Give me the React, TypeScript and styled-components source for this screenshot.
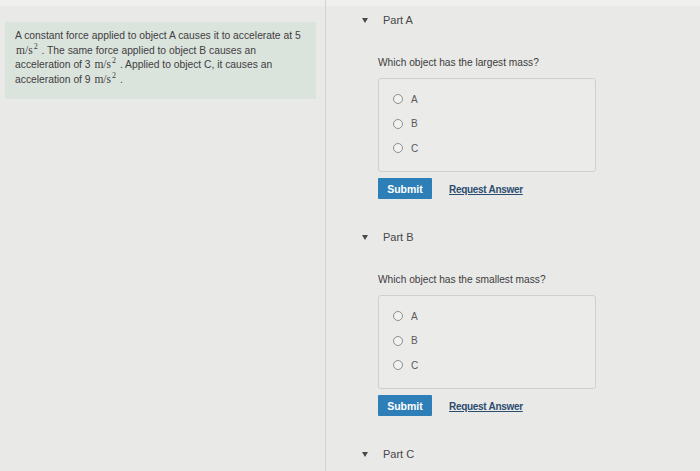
import React from "react";
import styled, { createGlobalStyle } from "styled-components";

const GlobalStyle = createGlobalStyle`
  html, body {
    margin: 0;
    padding: 0;
    background: #e9e9e7;
    font-family: "Liberation Sans", Arial, sans-serif;
    color: #3a3a3a;
  }
`;

const Page = styled.div`
  display: flex;
  width: 700px;
  height: 471px;
  overflow: hidden;
  background: linear-gradient(#efefed 0, #efefed 6px, #e9e9e7 6px);
`;

const LeftColumn = styled.aside`
  width: 326px;
  flex-shrink: 0;
  padding: 22px 0 0 5px;
  box-sizing: border-box;
  border-right: 1px solid #d3d3d1;
`;

const ProblemBox = styled.div`
  width: 311px;
  height: 77px;
  box-sizing: border-box;
  padding: 7px 10px 0 10px;
  background: #dbe3dd;
  font-size: 10.3px;
  line-height: 14.5px;
  color: #404040;
`;

const Math = styled.span`
  font-family: "Liberation Serif", "Times New Roman", serif;
  font-size: 11.5px;
  line-height: 1;
  margin: 0 1px;
  sup {
    font-size: 8px;
    vertical-align: baseline;
    position: relative;
    top: -5px;
    line-height: 0;
    margin-left: 1px;
  }
`;

const RightColumn = styled.main`
  flex: 1;
  padding: 10px 0 0 36px;
`;

const Section = styled.section`
  margin-bottom: 28px;
`;

const PartHeader = styled.div`
  display: flex;
  align-items: center;
  height: 20px;
  gap: 15px;
  font-size: 11px;
  color: #474747;
`;

const Caret = styled.span`
  width: 0;
  height: 0;
  border-left: 3.5px solid transparent;
  border-right: 3.5px solid transparent;
  border-top: 5px solid #4a4a4a;
`;

const Body = styled.div`
  padding-left: 16px;
`;

const Question = styled.p`
  margin: 26px 0 8px 0;
  font-size: 10.2px;
  line-height: 14px;
  color: #3c3c3c;
`;

const Choices = styled.div`
  width: 218px;
  height: 94px;
  box-sizing: border-box;
  padding: 8px 0 0 14px;
  border: 1px solid #cfcfcd;
  border-radius: 3px;
  background: #ebebea;
`;

const Choice = styled.label`
  display: flex;
  align-items: center;
  height: 24.5px;
  gap: 8px;
  font-size: 10px;
  color: #5a5a5a;
`;

const Radio = styled.span`
  width: 8px;
  height: 8px;
  border-radius: 50%;
  border: 1px solid #8e8e8e;
  background: #f2f2f1;
`;

const Actions = styled.div`
  display: flex;
  align-items: center;
  gap: 17px;
  margin-top: 6px;
`;

const SubmitButton = styled.button`
  width: 54px;
  height: 21px;
  border: none;
  border-radius: 1px;
  background: #2e7fb7;
  color: #fff;
  font-family: "Liberation Sans", Arial, sans-serif;
  font-weight: bold;
  font-size: 10.5px;
  padding: 0;
`;

const RequestLink = styled.a`
  font-size: 10px;
  font-weight: bold;
  letter-spacing: -0.3px;
  color: #2c4d70;
  text-decoration: underline;
  margin-top: 2px;
`;

type PartProps = { label: string; question?: string };

const Part = ({ label, question }: PartProps) => (
  <Section>
    <PartHeader>
      <Caret />
      {label}
    </PartHeader>
    {question && (
      <Body>
        <Question>{question}</Question>
        <Choices>
          {["A", "B", "C"].map((c) => (
            <Choice key={c}>
              <Radio />
              {c}
            </Choice>
          ))}
        </Choices>
        <Actions>
          <SubmitButton>Submit</SubmitButton>
          <RequestLink>Request Answer</RequestLink>
        </Actions>
      </Body>
    )}
  </Section>
);

const Unit = () => (
  <Math>
    m/s<sup>2</sup>
  </Math>
);

export default function App() {
  return (
    <>
      <GlobalStyle />
      <Page>
        <LeftColumn>
          <ProblemBox>
            A constant force applied to object A causes it to accelerate at 5
            <br />
            <Unit /> . The same force applied to object B causes an
            <br />
            acceleration of 3 <Unit /> . Applied to object C, it causes an
            <br />
            acceleration of 9 <Unit /> .
          </ProblemBox>
        </LeftColumn>
        <RightColumn>
          <Part label="Part A" question="Which object has the largest mass?" />
          <Part label="Part B" question="Which object has the smallest mass?" />
          <Part label="Part C" />
        </RightColumn>
      </Page>
    </>
  );
}
